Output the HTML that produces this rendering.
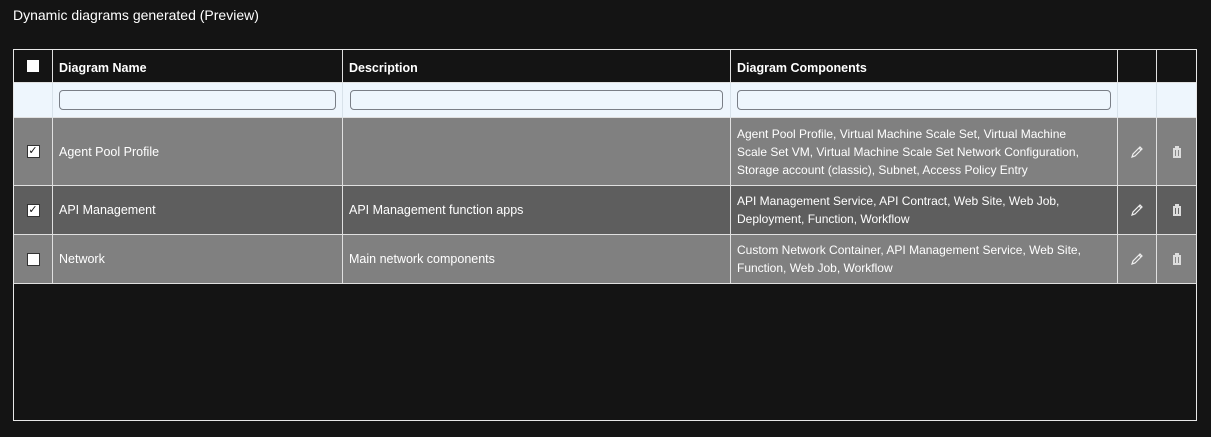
<!DOCTYPE html>
<html><head><style>
*{margin:0;padding:0;box-sizing:border-box}
body{width:1211px;height:437px;background:#141414;font-family:"Liberation Sans",sans-serif;color:#fff;position:relative;overflow:hidden}
.t{position:absolute;left:13px;top:7px;font-size:14px;color:#fff}
.box{position:absolute;left:13px;top:49px;width:1184px;height:372px;border:1px solid #e8e8e8}
.c{position:absolute;font-size:12.5px;display:flex;align-items:center;padding-left:6px;padding-right:4px;line-height:18px;border-right:1px solid #e0e0e0;border-bottom:1px solid #e0e0e0}
.h{font-weight:bold;background:#141414;padding-top:3px}
.f{background:#eef6fd;border-right-color:#d8e2ea}
.in{width:100%;height:20px;border:1px solid #7a7f87;border-radius:4px;background:#eef6fd}
.r1{background:#808080}.r2{background:#5e5e5e}
.cb{width:13px;height:13px;background:#fff;border:1px solid #333;color:#111;font-size:11px;line-height:11px;text-align:center}
.ic{justify-content:center;padding:0}
.w{font-size:12px;white-space:nowrap;overflow:hidden}
</style></head><body>
<div class="t">Dynamic diagrams generated (Preview)</div>
<div class="box"></div>
<div class="c h ic" style="left:14px;top:50px;width:39px;height:33px"><div style="width:12px;height:12px;background:#fff"></div></div>
<div class="c h" style="left:53px;top:50px;width:290px;height:33px">Diagram Name</div>
<div class="c h" style="left:343px;top:50px;width:388px;height:33px">Description</div>
<div class="c h" style="left:731px;top:50px;width:387px;height:33px">Diagram Components</div>
<div class="c h" style="left:1118px;top:50px;width:39px;height:33px"></div>
<div class="c h" style="left:1157px;top:50px;width:39px;height:33px;border-right:none"></div>
<div class="c f" style="left:14px;top:83px;width:39px;height:35px"></div>
<div class="c f" style="left:53px;top:83px;width:290px;height:35px;padding-right:6px"><div class="in"></div></div>
<div class="c f" style="left:343px;top:83px;width:388px;height:35px;padding-left:7px;padding-right:7px"><div class="in"></div></div>
<div class="c f" style="left:731px;top:83px;width:387px;height:35px;padding-right:6px"><div class="in"></div></div>
<div class="c f" style="left:1118px;top:83px;width:39px;height:35px"></div>
<div class="c f" style="left:1157px;top:83px;width:39px;height:35px;border-right:none"></div>

<div class="c r1 ic" style="left:14px;top:118px;width:39px;height:68px"><div class="cb">✓</div></div>
<div class="c r1" style="left:53px;top:118px;width:290px;height:68px">Agent Pool Profile</div>
<div class="c r1" style="left:343px;top:118px;width:388px;height:68px"></div>
<div class="c r1 w" style="left:731px;top:118px;width:387px;height:68px">Agent Pool Profile, Virtual Machine Scale Set, Virtual Machine<br>Scale Set VM, Virtual Machine Scale Set Network Configuration,<br>Storage account (classic), Subnet, Access Policy Entry</div>
<div class="c r1 ic" style="left:1118px;top:118px;width:39px;height:68px"><svg width="14" height="14" viewBox="0 0 14 14"><path d="M2 12 L3 9 L10 2 L12 4 L5 11 Z M9 3 L11 5" fill="none" stroke="#eee" stroke-width="1.2"/></svg></div>
<div class="c r1 ic" style="left:1157px;top:118px;width:39px;height:68px;border-right:none"><svg width="10" height="12"><rect x="1" y="2" width="8" height="10" fill="#ddd"/><rect x="3" y="0" width="4" height="2" fill="#ddd"/><rect x="3" y="4" width="1" height="6" fill="#888"/><rect x="6" y="4" width="1" height="6" fill="#888"/></svg></div>

<div class="c r2 ic" style="left:14px;top:186px;width:39px;height:49px"><div class="cb">✓</div></div>
<div class="c r2" style="left:53px;top:186px;width:290px;height:49px">API Management</div>
<div class="c r2" style="left:343px;top:186px;width:388px;height:49px">API Management function apps</div>
<div class="c r2 w" style="left:731px;top:186px;width:387px;height:49px">API Management Service, API Contract, Web Site, Web Job,<br>Deployment, Function, Workflow</div>
<div class="c r2 ic" style="left:1118px;top:186px;width:39px;height:49px"><svg width="14" height="14" viewBox="0 0 14 14"><path d="M2 12 L3 9 L10 2 L12 4 L5 11 Z M9 3 L11 5" fill="none" stroke="#eee" stroke-width="1.2"/></svg></div>
<div class="c r2 ic" style="left:1157px;top:186px;width:39px;height:49px;border-right:none"><svg width="10" height="12"><rect x="1" y="2" width="8" height="10" fill="#ddd"/><rect x="3" y="0" width="4" height="2" fill="#ddd"/><rect x="3" y="4" width="1" height="6" fill="#666"/><rect x="6" y="4" width="1" height="6" fill="#666"/></svg></div>

<div class="c r1 ic" style="left:14px;top:235px;width:39px;height:49px"><div class="cb"></div></div>
<div class="c r1" style="left:53px;top:235px;width:290px;height:49px">Network</div>
<div class="c r1" style="left:343px;top:235px;width:388px;height:49px">Main network components</div>
<div class="c r1 w" style="left:731px;top:235px;width:387px;height:49px">Custom Network Container, API Management Service, Web Site,<br>Function, Web Job, Workflow</div>
<div class="c r1 ic" style="left:1118px;top:235px;width:39px;height:49px"><svg width="14" height="14" viewBox="0 0 14 14"><path d="M2 12 L3 9 L10 2 L12 4 L5 11 Z M9 3 L11 5" fill="none" stroke="#eee" stroke-width="1.2"/></svg></div>
<div class="c r1 ic" style="left:1157px;top:235px;width:39px;height:49px;border-right:none"><svg width="10" height="12"><rect x="1" y="2" width="8" height="10" fill="#ddd"/><rect x="3" y="0" width="4" height="2" fill="#ddd"/><rect x="3" y="4" width="1" height="6" fill="#888"/><rect x="6" y="4" width="1" height="6" fill="#888"/></svg></div>
</body></html>
